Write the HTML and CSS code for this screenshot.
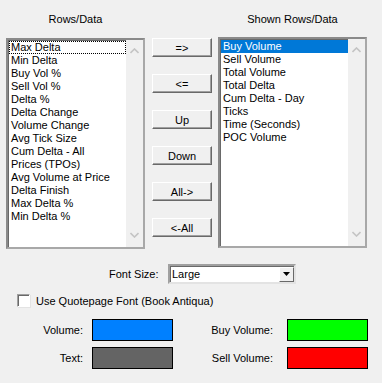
FILE: index.html
```html
<!DOCTYPE html>
<html lang="en">
<head>
    <meta charset="UTF-8">
    <title>Rows/Data</title>
    <link rel="stylesheet" href="styles.css">
</head>
<body>
    <div class="dialog">
        <div class="lists">
            <div class="col col-left">
                <div class="col-title">Rows/Data</div>
                <div class="listbox">
                    <ul class="items">
                        <li class="focused">Max Delta</li>
                        <li>Min Delta</li>
                        <li>Buy Vol %</li>
                        <li>Sell Vol %</li>
                        <li>Delta %</li>
                        <li>Delta Change</li>
                        <li>Volume Change</li>
                        <li>Avg Tick Size</li>
                        <li>Cum Delta - All</li>
                        <li>Prices (TPOs)</li>
                        <li>Avg Volume at Price</li>
                        <li>Delta Finish</li>
                        <li>Max Delta %</li>
                        <li>Min Delta %</li>
                    </ul>
                    <div class="scroll">
                        <svg width="9" height="6" viewBox="0 0 9 6"><path d="M0.5 5 L4.5 1 L8.5 5" fill="none" stroke="#c4c4c4" stroke-width="1.6"/></svg>
                        <svg width="9" height="6" viewBox="0 0 9 6"><path d="M0.5 1 L4.5 5 L8.5 1" fill="none" stroke="#c4c4c4" stroke-width="1.6"/></svg>
                    </div>
                </div>
            </div>

            <div class="buttons">
                <button class="btn">=&gt;</button>
                <button class="btn">&lt;=</button>
                <button class="btn">Up</button>
                <button class="btn">Down</button>
                <button class="btn">All-&gt;</button>
                <button class="btn">&lt;-All</button>
            </div>

            <div class="col col-right">
                <div class="col-title">Shown Rows/Data</div>
                <div class="listbox">
                    <ul class="items">
                        <li class="selected">Buy Volume</li>
                        <li>Sell Volume</li>
                        <li>Total Volume</li>
                        <li>Total Delta</li>
                        <li>Cum Delta - Day</li>
                        <li>Ticks</li>
                        <li>Time (Seconds)</li>
                        <li>POC Volume</li>
                    </ul>
                    <div class="scroll">
                        <svg width="9" height="6" viewBox="0 0 9 6"><path d="M0.5 5 L4.5 1 L8.5 5" fill="none" stroke="#c4c4c4" stroke-width="1.6"/></svg>
                        <svg width="9" height="6" viewBox="0 0 9 6"><path d="M0.5 1 L4.5 5 L8.5 1" fill="none" stroke="#c4c4c4" stroke-width="1.6"/></svg>
                    </div>
                </div>
            </div>
        </div>

        <div class="font-row">
            <span class="font-label">Font Size:</span>
            <div class="combo">
                <span class="combo-value">Large</span>
                <span class="combo-btn">
                    <svg width="7" height="4" viewBox="0 0 7 4"><path d="M0 0 H7 L3.5 4 Z" fill="#000"/></svg>
                </span>
            </div>
        </div>

        <div class="check-row">
            <span class="checkbox"></span>
            <span>Use Quotepage Font (Book Antiqua)</span>
        </div>

        <div class="colors">
            <span class="color-label">Volume:</span>
            <span class="swatch blue"></span>
            <span class="color-label">Buy Volume:</span>
            <span class="swatch green"></span>
            <span class="color-label">Text:</span>
            <span class="swatch gray"></span>
            <span class="color-label">Sell Volume:</span>
            <span class="swatch red"></span>
        </div>
    </div>
</body>
</html>
```

FILE: styles.css
```css
body {
    margin: 0;
    background: #f0f0f0;
    font-family: "Liberation Sans", Arial, sans-serif;
    font-size: 11px;
    color: #000;
}
.dialog {
    width: 382px;
    height: 383px;
    padding: 12px 0 0 6px;
    box-sizing: border-box;
}
.lists {
    display: flex;
    align-items: flex-start;
}
.col-left {
    width: 139px;
}
.col-right {
    width: 149px;
    margin-left: 6px;
}
.col-title {
    height: 14px;
    line-height: 14px;
    text-align: center;
    margin-bottom: 12px;
}
.col-right .col-title {
    margin-bottom: 11px;
}
.listbox {
    display: flex;
    height: 211px;
    background: #fff;
    border: 2px solid;
    border-color: #8a8a8a #a8a8a8 #a8a8a8 #8a8a8a;
    box-shadow: inset 1px 1px 0 #696969;
    box-sizing: border-box;
}
.items {
    flex: 1;
    list-style: none;
    margin: 0;
    padding: 1px 0 0 1px;
}
.items li {
    height: 13px;
    line-height: 13px;
    padding-left: 2px;
    white-space: nowrap;
}
.items li.focused {
    outline: 1px dotted #000;
    outline-offset: -1px;
}
.items li.selected {
    background: #0078d7;
    color: #fff;
}
.scroll {
    width: 17px;
    background: #f0f0f0;
    display: flex;
    flex-direction: column;
    justify-content: space-between;
    align-items: center;
    padding: 8px 0 9px;
    box-sizing: border-box;
}
.buttons {
    display: flex;
    flex-direction: column;
    gap: 17px;
    margin: 26px 0 0 7px;
}
.btn {
    width: 60px;
    height: 19px;
    padding: 0;
    font: inherit;
    color: #000;
    background: #f0f0f0;
    border: 1px solid;
    border-color: #fff #696969 #696969 #fff;
    box-shadow: inset -1px -1px 0 #a0a0a0;
}
.font-row {
    display: flex;
    align-items: center;
    margin: 15px 0 0 103px;
}
.font-label {
    width: 59px;
}
.combo {
    display: flex;
    align-items: center;
    justify-content: space-between;
    width: 128px;
    height: 20px;
    background: #fff;
    border: 2px solid;
    border-color: #a0a0a0 #e3e3e3 #e3e3e3 #a0a0a0;
    box-shadow: inset 1px 1px 0 #696969;
    box-sizing: border-box;
}
.combo-value {
    padding-left: 2px;
}
.combo-btn {
    display: flex;
    align-items: center;
    justify-content: center;
    width: 15px;
    height: 15px;
    margin-right: 0;
    background: #f0f0f0;
    border: 1px solid;
    border-color: #fff #696969 #696969 #fff;
    box-sizing: border-box;
}
.check-row {
    display: flex;
    align-items: center;
    gap: 6px;
    margin: 10px 0 0 11px;
}
.checkbox {
    width: 13px;
    height: 13px;
    background: #fff;
    border: 1px solid;
    border-color: #a0a0a0 #fff #fff #a0a0a0;
    box-shadow: inset 1px 1px 0 #696969, 1px 1px 0 #e3e3e3;
    box-sizing: border-box;
}
.colors {
    display: grid;
    grid-template-columns: 77px 81px 96px 81px;
    column-gap: 9px;
    row-gap: 6px;
    align-items: center;
    margin-top: 12px;
}
.colors .color-label:nth-child(3),
.colors .color-label:nth-child(7) {
    margin-right: 5px;
}
.color-label {
    text-align: right;
}
.swatch {
    height: 22px;
    border: 1px solid #000;
    box-sizing: border-box;
}
.blue {
    background: #0080ff;
}
.green {
    background: #00ff00;
}
.gray {
    background: #646464;
}
.red {
    background: #ff0000;
}
```
